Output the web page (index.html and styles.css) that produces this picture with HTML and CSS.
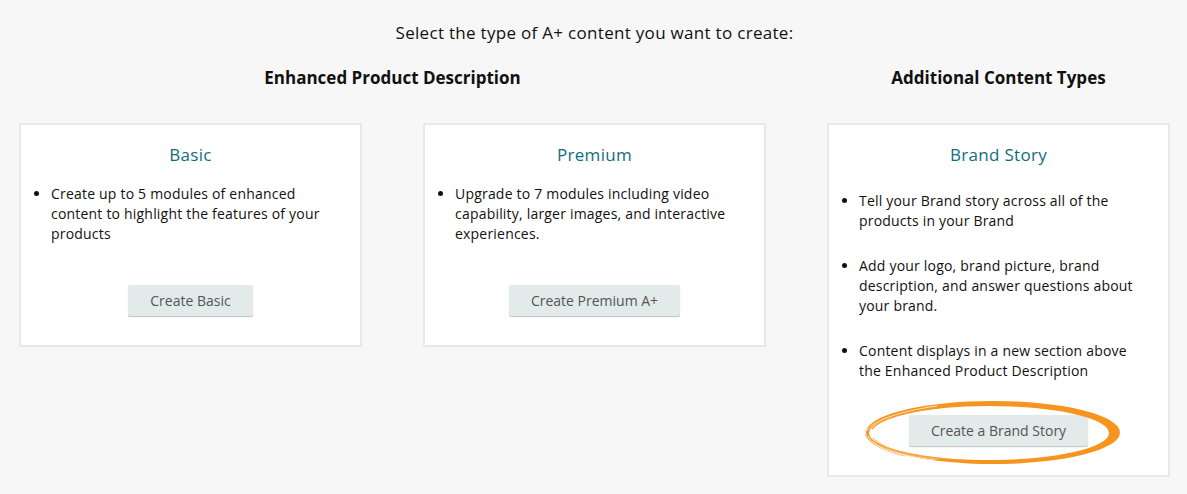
FILE: index.html
```html
<!DOCTYPE html>
<html lang="en">
<head>
  <meta charset="UTF-8">
  <title>A+ Content Manager</title>
  <link rel="stylesheet" href="styles.css">
</head>
<body>

  <p class="intro">Select the type of A+ content you want to create:</p>

  <div class="groups">
    <!-- Enhanced Product Description -->
    <section class="group">
      <h2 class="group-title">Enhanced Product Description</h2>
      <div class="card-row">
        <div class="card">
          <h3 class="card-title">Basic</h3>
          <ul class="card-list">
            <li>Create up to 5 modules of enhanced content to highlight the features of your products</li>
          </ul>
          <div class="card-action">
            <button class="btn">Create Basic</button>
          </div>
        </div>

        <div class="card">
          <h3 class="card-title">Premium</h3>
          <ul class="card-list">
            <li>Upgrade to 7 modules including video capability, larger images, and interactive experiences.</li>
          </ul>
          <div class="card-action">
            <button class="btn">Create Premium A+</button>
          </div>
        </div>
      </div>
    </section>

    <!-- Additional Content Types -->
    <section class="group">
      <h2 class="group-title">Additional Content Types</h2>
      <div class="card-row">
        <div class="card">
          <h3 class="card-title">Brand Story</h3>
          <ul class="card-list card-list-spaced">
            <li>Tell your Brand story across all of the products in your Brand</li>
            <li>Add your logo, brand picture, brand description, and answer questions about your brand.</li>
            <li>Content displays in a new section above the Enhanced Product Description</li>
          </ul>
          <div class="card-action card-action-tight">
            <span class="highlight">
              <button class="btn">Create a Brand Story</button>
              <!-- hand drawn orange circle round the button -->
              <svg class="swoosh" width="258" height="66" viewBox="0 0 258 66">
                <path fill="#f7941d" fill-rule="evenodd"
                  d="M1 32.5 A127 31.5 0 1 0 255 32.5 A127 31.5 0 1 0 1 32.5 Z
                     M4 33 A120 27 0 1 0 244 33 A120 27 0 1 0 4 33 Z"/>
                <path d="M2 31 C6 22 30 12 72 6" fill="none" stroke="#fff" stroke-width="0.8" opacity="0.9"/>
                <path d="M3 36 C8 46 30 55 70 60" fill="none" stroke="#fff" stroke-width="0.8" opacity="0.9"/>
                <path d="M7 29 C14 20 40 11 80 7" fill="none" stroke="#f7941d" stroke-width="1.3" opacity="0.9"/>
                <path d="M8 38 C16 48 44 56 84 59" fill="none" stroke="#f9a94a" stroke-width="1" opacity="0.9"/>
                <path d="M11 40 C20 50 46 57 74 59" fill="none" stroke="#fbc27f" stroke-width="0.8" opacity="0.9"/>
                <path d="M0 34 C3 43 18 51 40 56" fill="none" stroke="#f7941d" stroke-width="0.8" opacity="0.7"/>
              </svg>
            </span>
          </div>
        </div>
      </div>
    </section>
  </div>

</body>
</html>
```

FILE: styles.css
```css
body {
  margin: 0;
  padding: 0 17px 0 19px;
  background-color: #f7f7f7;
  color: #111;
  font-family: "Open Sans", Arial, sans-serif;
  font-size: 14px;
}
.intro {
  margin: 0;
  padding-top: 21px;
  line-height: 24px;
  font-size: 17px;
  letter-spacing: 0.3px;
  text-align: center;
}
.groups {
  display: flex;
  gap: 61px;
  margin-top: 21px;
  align-items: flex-start;
}
.group-title {
  margin: 0 0 33px;
  font-size: 17px;
  line-height: 24px;
  text-align: center;
}
.card-row {
  display: flex;
  gap: 61px;
}
.card {
  width: 343px;
  box-sizing: border-box;
  padding: 18px 16px 29px;
  background-color: white;
  border: 2px solid #e8e8e8;
}
.card-title {
  margin: 0;
  font-size: 17px;
  font-weight: normal;
  line-height: 24px;
  letter-spacing: 0.3px;
  text-align: center;
  color: #0f6d7e;
}
.card-list {
  margin: 17px 0 0;
  padding-left: 14px;
  line-height: 20px;
  letter-spacing: 0.2px;
}
.card-list-spaced {
  margin-top: 24px;
  display: flex;
  flex-direction: column;
  gap: 25px;
}
.card-action {
  margin-top: 41px;
  text-align: center;
}
.card-action-tight {
  margin-top: 34px;
}
.btn {
  height: 31px;
  padding: 0 22px;
  border: none;
  border-radius: 2px;
  background-color: #e2eaea;
  box-shadow: 0 1px 1px rgba(0, 0, 0, 0.25);
  color: #555;
  font-family: inherit;
  font-size: 14px;
  cursor: pointer;
}
.highlight {
  position: relative;
  display: inline-block;
}
.swoosh {
  position: absolute;
  left: -44px;
  top: -15px;
  pointer-events: none;
}
```
